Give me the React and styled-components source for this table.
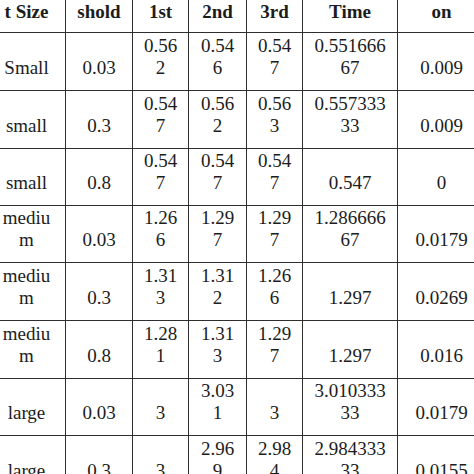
import React from 'react'
import styled, { createGlobalStyle } from 'styled-components'

const GlobalStyle = createGlobalStyle`
  html, body {
    margin: 0;
    padding: 0;
    background: #ffffff;
  }
`

const Frame = styled.div`
  width: 474px;
  height: 474px;
  overflow: hidden;
  background: #ffffff;
`

const Table = styled.table`
  margin: -28px 0 0 -13px;
  border-collapse: collapse;
  table-layout: fixed;
  width: 498px;
  font-family: "Liberation Serif", "Times New Roman", serif;
  font-size: 19px;
  line-height: 22px;
  color: #1c1c1c;
`

const HeadCell = styled.th`
  box-sizing: border-box;
  height: ${p => p.$h}px;
  padding: 0 9px 9px;
  border: 1px solid #2e2e2e;
  font-weight: bold;
  text-align: center;
  vertical-align: bottom;
  word-break: break-all;
`

const Cell = styled.td`
  box-sizing: border-box;
  height: ${p => p.$h}px;
  padding: 0 9px 11px;
  border: 1px solid #2e2e2e;
  text-align: center;
  vertical-align: bottom;
  word-break: break-all;
`

const widths = [78, 67, 56, 58, 56, 95, 88]

const headers = [['Datase', 't Size'], ['Thre', 'shold'], ['1st'], ['2nd'], ['3rd'], ['Average', 'Time'], ['Deviati', 'on']]

const rows = [
  ['Small', '0.03', '0.562', '0.546', '0.547', '0.55166667', '0.009'],
  ['small', '0.3', '0.547', '0.562', '0.563', '0.55733333', '0.009'],
  ['small', '0.8', '0.547', '0.547', '0.547', '0.547', '0'],
  ['medium', '0.03', '1.266', '1.297', '1.297', '1.28666667', '0.0179'],
  ['medium', '0.3', '1.313', '1.312', '1.266', '1.297', '0.0269'],
  ['medium', '0.8', '1.281', '1.313', '1.297', '1.297', '0.016'],
  ['large', '0.03', '3', '3.031', '3', '3.01033333', '0.0179'],
  ['large', '0.3', '3', '2.969', '2.984', '2.98433333', '0.0155'],
]

const heights = [58, 58, 57, 57, 58, 58, 57, 58]

export default function App() {
  return (
    <>
      <GlobalStyle />
      <Frame>
        <Table>
          <colgroup>
            {widths.map((w, i) => <col key={`c${i}`} style={{ width: w }} />)}
          </colgroup>
          <thead>
            <tr>
              {headers.map((h, i) => (
                <HeadCell key={`h${i}`} $h={60}>
                  {h.map((part, j) => (
                    <React.Fragment key={j}>{j > 0 && <br />}{part}</React.Fragment>
                  ))}
                </HeadCell>
              ))}
            </tr>
          </thead>
          <tbody>
            {rows.map((r, i) => (
              <tr key={`r${i}`}>
                {r.map((v, j) => <Cell key={`v${j}`} $h={heights[i]}>{v}</Cell>)}
              </tr>
            ))}
          </tbody>
        </Table>
      </Frame>
    </>
  )
}
